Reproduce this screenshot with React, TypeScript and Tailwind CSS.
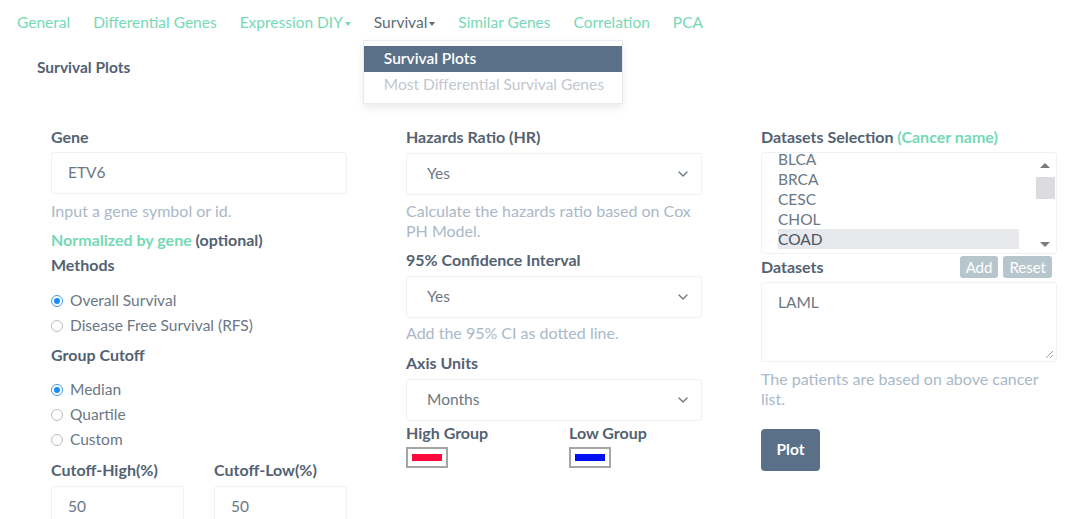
import React from "react";
import { ChevronDown } from "lucide-react";

const font = { fontFamily: "Lato, 'Noto Sans', sans-serif" };

function Label({ children }: { children: React.ReactNode }) {
  return <div className="text-[16px] font-bold text-[#536273] leading-[20px]">{children}</div>;
}

function Help({ children }: { children: React.ReactNode }) {
  return <div className="text-[16px] text-[#a9b9c9] leading-[20px]">{children}</div>;
}

function Select({ value }: { value: string }) {
  return (
    <div className="h-[42px] border border-[#eef2f6] rounded-[3px] flex items-center justify-between pl-[20px] pr-[10px] text-[15.5px] text-[#6b7785]">
      <span>{value}</span>
      <ChevronDown className="w-4 h-4 text-[#6b7785]" strokeWidth={2} />
    </div>
  );
}

function Radio({ label, checked }: { label: string; checked?: boolean }) {
  return (
    <div className="flex items-center gap-[7px] h-[25px] text-[15.5px] text-[#6b7785]">
      <span
        className={
          checked
            ? "w-[12px] h-[12px] rounded-full border border-[#3b9cf0] flex items-center justify-center"
            : "w-[12px] h-[12px] rounded-full border border-[#b8bec6]"
        }
      >
        {checked && <span className="w-[6px] h-[6px] rounded-full bg-[#1a8cf0]" />}
      </span>
      <span>{label}</span>
    </div>
  );
}

function Swatch({ color }: { color: string }) {
  return (
    <div className="w-[42px] h-[21px] border-2 border-[#a5a5a5] bg-white flex items-center justify-center">
      <div className="w-[30px] h-[7px]" style={{ background: color }} />
    </div>
  );
}

export default function App() {
  const nav = ["General", "Differential Genes", "Expression DIY", "Survival", "Similar Genes", "Correlation", "PCA"];
  const datasets = ["BLCA", "BRCA", "CESC", "CHOL", "COAD"];

  return (
    <div className="w-[1080px] h-[519px] bg-white overflow-hidden relative" style={font}>
      {/* top nav */}
      <div className="flex items-center gap-[23px] pl-[17px] h-[45px] text-[15.5px]">
        {nav.map((n) => (
          <div key={n} className="relative">
            <span className={n === "Survival" ? "text-[#5c6b7a]" : "text-[#76d9b6]"}>
              {n}
              {(n === "Expression DIY" || n === "Survival") && (
                <span className="inline-block ml-[2px] align-middle w-0 h-0 border-l-[3px] border-r-[3px] border-t-[4px] border-l-transparent border-r-transparent border-t-current" />
              )}
            </span>
            {n === "Survival" && (
              <div className="absolute left-[-11px] top-[29px] w-[260px] bg-white border border-[#e8ecef] shadow-[0_4px_8px_rgba(0,0,0,0.08)] py-[5px] z-10">
                <div className="h-[26px] bg-[#5a7088] text-white font-semibold pl-[20px] flex items-center">Survival Plots</div>
                <div className="h-[26px] text-[#c2c8ce] pl-[20px] flex items-center">Most Differential Survival Genes</div>
              </div>
            )}
          </div>
        ))}
      </div>

      <div className="pl-[37px] mt-[12px] text-[15.5px] font-bold text-[#536273] leading-[20px]">Survival Plots</div>

      {/* form */}
      <div className="grid grid-cols-[296px_296px_296px] gap-x-[59px] pl-[51px] mt-[50px]">
        {/* column 1 */}
        <div className="flex flex-col">
          <Label>Gene</Label>
          <div className="mt-[5px] h-[42px] border border-[#eef2f6] rounded-[3px] flex items-center pl-[16px] text-[15.5px] text-[#6b7785]">ETV6</div>
          <div className="mt-[7px]"><Help>Input a gene symbol or id.</Help></div>
          <div className="mt-[9px] text-[16px] font-bold leading-[20px]">
            <span className="text-[#76d9b6]">Normalized by gene</span> <span className="text-[#536273]">(optional)</span>
          </div>
          <div className="mt-[5px]"><Label>Methods</Label></div>
          <div className="mt-[13px]">
            <Radio label="Overall Survival" checked />
            <Radio label="Disease Free Survival (RFS)" />
          </div>
          <div className="mt-[7px]"><Label>Group Cutoff</Label></div>
          <div className="mt-[12px]">
            <Radio label="Median" checked />
            <Radio label="Quartile" />
            <Radio label="Custom" />
          </div>
          <div className="mt-[8px] grid grid-cols-2 gap-x-[30px]">
            <div>
              <Label>Cutoff-High(%)</Label>
              <div className="mt-[6px] h-[42px] border border-[#eef2f6] rounded-[3px] flex items-center pl-[16px] text-[15.5px] text-[#6b7785]">50</div>
            </div>
            <div>
              <Label>Cutoff-Low(%)</Label>
              <div className="mt-[6px] h-[42px] border border-[#eef2f6] rounded-[3px] flex items-center pl-[16px] text-[15.5px] text-[#6b7785]">50</div>
            </div>
          </div>
        </div>

        {/* column 2 */}
        <div className="flex flex-col">
          <Label>Hazards Ratio (HR)</Label>
          <div className="mt-[6px]"><Select value="Yes" /></div>
          <div className="mt-[6px]"><Help>Calculate the hazards ratio based on Cox PH Model.</Help></div>
          <div className="mt-[9px]"><Label>95% Confidence Interval</Label></div>
          <div className="mt-[6px]"><Select value="Yes" /></div>
          <div className="mt-[5px]"><Help>Add the 95% CI as dotted line.</Help></div>
          <div className="mt-[10px]"><Label>Axis Units</Label></div>
          <div className="mt-[6px]"><Select value="Months" /></div>
          <div className="mt-[2px] grid grid-cols-2 gap-x-[30px]">
            <div>
              <Label>High Group</Label>
              <div className="mt-[4px]"><Swatch color="#ff0a3c" /></div>
            </div>
            <div>
              <Label>Low Group</Label>
              <div className="mt-[4px]"><Swatch color="#0010f0" /></div>
            </div>
          </div>
        </div>

        {/* column 3 */}
        <div className="flex flex-col">
          <Label>
            Datasets Selection <span className="text-[#76d9b6]">(Cancer name)</span>
          </Label>
          <div className="mt-[5px] h-[102px] border border-[#eef2f6] rounded-[3px] flex overflow-hidden">
            <div className="flex-1 pl-[16px] pt-0 overflow-hidden">
              <div className="-mt-[4px] text-[15.5px] text-[#6b7785] leading-[20px]">
                {datasets.map((d) => (
                  <div key={d} className={d === "COAD" ? "bg-[#e8e9ec] text-[#4b5563] w-[241px]" : ""}>{d}</div>
                ))}
              </div>
            </div>
            <div className="w-[22px] flex flex-col items-center pt-[10px] pb-[6px]">
              <span className="w-0 h-0 border-l-[5px] border-r-[5px] border-b-[5px] border-l-transparent border-r-transparent border-b-[#7a7a7a]" />
              <div className="mt-[9px] w-[19px] h-[22px] bg-[#dcdcde]" />
              <div className="flex-1" />
              <span className="w-0 h-0 border-l-[5px] border-r-[5px] border-t-[5px] border-l-transparent border-r-transparent border-t-[#7a7a7a]" />
            </div>
          </div>
          <div className="flex items-center justify-between h-[24px] mt-[1px] pr-[5px]">
            <Label>Datasets</Label>
            <div className="flex gap-[5px]">
              <div className="h-[22px] px-[6px] bg-[#b7c6cd] rounded-[3px] text-white text-[15px] flex items-center">Add</div>
              <div className="h-[22px] px-[6px] bg-[#b7c6cd] rounded-[3px] text-white text-[15px] flex items-center">Reset</div>
            </div>
          </div>
          <div className="mt-[3px] h-[80px] border border-[#eef2f6] rounded-[3px] pl-[16px] pt-[8px] text-[15.5px] text-[#6b7785] relative">
            LAML
            <svg className="absolute right-[2px] bottom-[2px]" width="10" height="10" viewBox="0 0 10 10">
              <path d="M9 2 L2 9 M9 6 L6 9" stroke="#a0a0a0" strokeWidth="1" />
            </svg>
          </div>
          <div className="mt-[7px]"><Help>The patients are based on above cancer list.</Help></div>
          <div className="mt-[20px]">
            <div className="inline-flex h-[42px] w-[59px] items-center justify-center rounded-[4px] bg-[#5a7088] text-white font-bold text-[15.5px]">Plot</div>
          </div>
        </div>
      </div>
    </div>
  );
}
